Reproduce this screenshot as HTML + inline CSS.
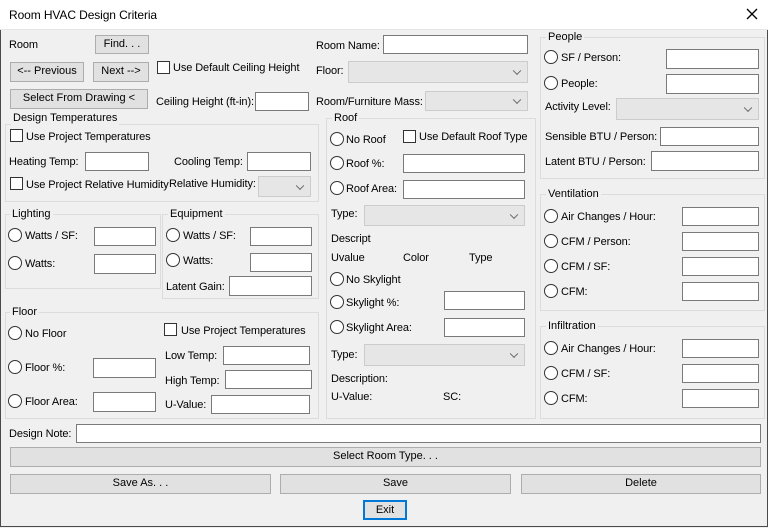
<!DOCTYPE html>
<html><head><meta charset="utf-8"><style>
*{box-sizing:border-box;margin:0;padding:0}
body{width:768px;height:528px;background:#f0f0f0;font-family:"Liberation Sans",sans-serif;font-size:11px;color:#000;position:relative;overflow:hidden}
#win{position:absolute;left:0;top:0;width:768px;height:527px;border:1px solid #4a4a4a;border-top:none}
#tb{position:absolute;left:0;top:0;width:768px;height:30px;background:#fff;border-bottom:1px solid #e5e5e5}
.t{position:absolute;white-space:nowrap;line-height:14px;letter-spacing:-0.1px}
.in{position:absolute;background:#fff;border:1px solid #7a7a7a}
.cb{position:absolute;background:#e6e6e6;border:1px solid #cccccc}
.cb:after{content:"";position:absolute;right:7px;top:50%;width:5px;height:5px;border-right:1px solid #666;border-bottom:1px solid #666;transform:translateY(-70%) rotate(45deg)}
.bt{position:absolute;background:#e1e1e1;border:1px solid #adadad;text-align:center;line-height:17px}
.gb{position:absolute;border:1px solid #dcdcdc}
.gt{position:absolute;background:#f0f0f0;padding:0 2px;line-height:14px;white-space:nowrap}
.ck{position:absolute;width:13px;height:13px;background:#fff;border:1px solid #333}
.rd{position:absolute;width:14px;height:14px;background:#fff;border:1px solid #333;border-radius:50%}
</style></head><body>
<div id="win"></div>
<div id="tb"><div class="t" style="left:9px;top:8px;font-size:12px">Room HVAC Design Criteria</div>
<svg style="position:absolute;left:746px;top:8px" width="12" height="12"><path d="M1 1L11 11M11 1L1 11" stroke="#000" stroke-width="1.3"/></svg></div>

<div class="t" style="left:9px;top:38px">Room</div>
<div class="bt" style="left:95px;top:35px;width:54px;height:19px">Find. . .</div>
<div class="bt" style="left:10px;top:62px;width:74px;height:20px">&lt;-- Previous</div>
<div class="bt" style="left:93px;top:62px;width:56px;height:20px">Next --&gt;</div>
<div class="ck" style="left:157px;top:61px"></div><div class="t" style="left:173px;top:61px">Use Default Ceiling Height</div>
<div class="bt" style="left:10px;top:89px;width:138px;height:20px">Select From Drawing &lt;</div>
<div class="t" style="left:156px;top:95px">Ceiling Height (ft-in):</div>
<div class="in" style="left:255px;top:92px;width:54px;height:19px"></div>

<div class="t" style="left:316px;top:39px">Room Name:</div>
<div class="in" style="left:383px;top:35px;width:145px;height:19px"></div>
<div class="t" style="left:316px;top:64px">Floor:</div>
<div class="cb" style="left:348px;top:61px;width:180px;height:22px"></div>
<div class="t" style="left:316px;top:95px">Room/Furniture Mass:</div>
<div class="cb" style="left:425px;top:91px;width:103px;height:20px"></div>

<div class="gb" style="left:5px;top:124px;width:314px;height:78px"></div>
<div class="gt" style="left:11px;top:111px">Design Temperatures</div>
<div class="ck" style="left:10px;top:129px"></div><div class="t" style="left:26px;top:130px">Use Project Temperatures</div>
<div class="t" style="left:9px;top:155px">Heating Temp:</div>
<div class="in" style="left:85px;top:152px;width:64px;height:19px"></div>
<div class="t" style="left:174px;top:155px">Cooling Temp:</div>
<div class="in" style="left:247px;top:152px;width:64px;height:19px"></div>
<div class="ck" style="left:10px;top:177px"></div><div class="t" style="left:26px;top:178px">Use Project Relative Humidity</div>
<div class="t" style="left:169px;top:177px">Relative Humidity:</div>
<div class="cb" style="left:258px;top:176px;width:53px;height:21px"></div>

<div class="gb" style="left:5px;top:214px;width:156px;height:75px"></div>
<div class="gt" style="left:10px;top:207px">Lighting</div>
<div class="rd" style="left:8px;top:228px"></div><div class="t" style="left:25px;top:229px">Watts / SF:</div>
<div class="in" style="left:94px;top:227px;width:62px;height:19px"></div>
<div class="rd" style="left:8px;top:256px"></div><div class="t" style="left:25px;top:257px">Watts:</div>
<div class="in" style="left:94px;top:254px;width:62px;height:20px"></div>

<div class="gb" style="left:162px;top:214px;width:157px;height:85px"></div>
<div class="gt" style="left:168px;top:207px">Equipment</div>
<div class="rd" style="left:166px;top:228px"></div><div class="t" style="left:183px;top:229px">Watts / SF:</div>
<div class="in" style="left:250px;top:227px;width:62px;height:19px"></div>
<div class="rd" style="left:166px;top:253px"></div><div class="t" style="left:183px;top:254px">Watts:</div>
<div class="in" style="left:250px;top:253px;width:62px;height:19px"></div>
<div class="t" style="left:166px;top:280px">Latent Gain:</div>
<div class="in" style="left:229px;top:276px;width:83px;height:20px"></div>

<div class="gb" style="left:5px;top:312px;width:314px;height:107px"></div>
<div class="gt" style="left:10px;top:305px">Floor</div>
<div class="rd" style="left:8px;top:326px"></div><div class="t" style="left:25px;top:327px">No Floor</div>
<div class="ck" style="left:164px;top:323px"></div><div class="t" style="left:181px;top:324px">Use Project Temperatures</div>
<div class="rd" style="left:8px;top:360px"></div><div class="t" style="left:25px;top:361px">Floor %:</div>
<div class="in" style="left:93px;top:358px;width:63px;height:20px"></div>
<div class="t" style="left:165px;top:349px">Low Temp:</div>
<div class="in" style="left:223px;top:346px;width:87px;height:19px"></div>
<div class="t" style="left:165px;top:374px">High Temp:</div>
<div class="in" style="left:225px;top:370px;width:87px;height:19px"></div>
<div class="rd" style="left:8px;top:394px"></div><div class="t" style="left:25px;top:395px">Floor Area:</div>
<div class="in" style="left:93px;top:392px;width:63px;height:20px"></div>
<div class="t" style="left:165px;top:398px">U-Value:</div>
<div class="in" style="left:211px;top:395px;width:99px;height:19px"></div>

<div class="gb" style="left:326px;top:118px;width:210px;height:301px"></div>
<div class="gt" style="left:332px;top:111px">Roof</div>
<div class="rd" style="left:330px;top:132px"></div><div class="t" style="left:346px;top:133px">No Roof</div>
<div class="ck" style="left:403px;top:130px"></div><div class="t" style="left:419px;top:130px">Use Default Roof Type</div>
<div class="rd" style="left:330px;top:156px"></div><div class="t" style="left:346px;top:157px">Roof %:</div>
<div class="in" style="left:403px;top:154px;width:122px;height:19px"></div>
<div class="rd" style="left:330px;top:181px"></div><div class="t" style="left:346px;top:182px">Roof Area:</div>
<div class="in" style="left:403px;top:180px;width:122px;height:19px"></div>
<div class="t" style="left:331px;top:207px">Type:</div>
<div class="cb" style="left:364px;top:205px;width:161px;height:21px"></div>
<div class="t" style="left:331px;top:232px">Descript</div>
<div class="t" style="left:331px;top:251px">Uvalue</div>
<div class="t" style="left:403px;top:251px">Color</div>
<div class="t" style="left:469px;top:251px">Type</div>
<div class="rd" style="left:330px;top:272px"></div><div class="t" style="left:346px;top:273px">No Skylight</div>
<div class="rd" style="left:330px;top:295px"></div><div class="t" style="left:346px;top:296px">Skylight %:</div>
<div class="in" style="left:444px;top:291px;width:81px;height:19px"></div>
<div class="rd" style="left:330px;top:320px"></div><div class="t" style="left:346px;top:321px">Skylight Area:</div>
<div class="in" style="left:444px;top:318px;width:81px;height:19px"></div>
<div class="t" style="left:331px;top:348px">Type:</div>
<div class="cb" style="left:364px;top:344px;width:161px;height:22px"></div>
<div class="t" style="left:331px;top:372px">Description:</div>
<div class="t" style="left:331px;top:390px">U-Value:</div>
<div class="t" style="left:443px;top:390px">SC:</div>

<div class="gb" style="left:540px;top:37px;width:225px;height:142px"></div>
<div class="gt" style="left:546px;top:30px">People</div>
<div class="rd" style="left:544px;top:50px"></div><div class="t" style="left:561px;top:51px">SF / Person:</div>
<div class="in" style="left:666px;top:49px;width:93px;height:20px"></div>
<div class="rd" style="left:544px;top:76px"></div><div class="t" style="left:561px;top:77px">People:</div>
<div class="in" style="left:666px;top:74px;width:93px;height:20px"></div>
<div class="t" style="left:545px;top:100px">Activity Level:</div>
<div class="cb" style="left:616px;top:98px;width:143px;height:22px"></div>
<div class="t" style="left:545px;top:130px">Sensible BTU / Person:</div>
<div class="in" style="left:660px;top:127px;width:99px;height:19px"></div>
<div class="t" style="left:545px;top:155px">Latent BTU / Person:</div>
<div class="in" style="left:651px;top:151px;width:108px;height:20px"></div>

<div class="gb" style="left:540px;top:194px;width:225px;height:117px"></div>
<div class="gt" style="left:546px;top:187px">Ventilation</div>
<div class="rd" style="left:544px;top:209px"></div><div class="t" style="left:561px;top:210px">Air Changes / Hour:</div>
<div class="in" style="left:682px;top:207px;width:77px;height:19px"></div>
<div class="rd" style="left:544px;top:234px"></div><div class="t" style="left:561px;top:235px">CFM / Person:</div>
<div class="in" style="left:682px;top:232px;width:77px;height:19px"></div>
<div class="rd" style="left:544px;top:259px"></div><div class="t" style="left:561px;top:260px">CFM / SF:</div>
<div class="in" style="left:682px;top:257px;width:77px;height:19px"></div>
<div class="rd" style="left:544px;top:284px"></div><div class="t" style="left:561px;top:285px">CFM:</div>
<div class="in" style="left:682px;top:282px;width:77px;height:19px"></div>

<div class="gb" style="left:540px;top:326px;width:225px;height:93px"></div>
<div class="gt" style="left:546px;top:319px">Infiltration</div>
<div class="rd" style="left:544px;top:341px"></div><div class="t" style="left:561px;top:342px">Air Changes / Hour:</div>
<div class="in" style="left:682px;top:339px;width:77px;height:19px"></div>
<div class="rd" style="left:544px;top:366px"></div><div class="t" style="left:561px;top:367px">CFM / SF:</div>
<div class="in" style="left:682px;top:364px;width:77px;height:19px"></div>
<div class="rd" style="left:544px;top:391px"></div><div class="t" style="left:561px;top:392px">CFM:</div>
<div class="in" style="left:682px;top:389px;width:77px;height:19px"></div>

<div class="t" style="left:9px;top:427px">Design Note:</div>
<div class="in" style="left:76px;top:424px;width:685px;height:19px"></div>
<div class="bt" style="left:10px;top:447px;width:751px;height:20px">Select Room Type. . .</div>
<div class="bt" style="left:10px;top:474px;width:261px;height:20px">Save As. . .</div>
<div class="bt" style="left:280px;top:474px;width:231px;height:20px">Save</div>
<div class="bt" style="left:521px;top:474px;width:240px;height:20px">Delete</div>
<div class="bt" style="left:363px;top:500px;width:44px;height:20px;border:2px solid #0078d7;line-height:16px">Exit</div>
</body></html>
